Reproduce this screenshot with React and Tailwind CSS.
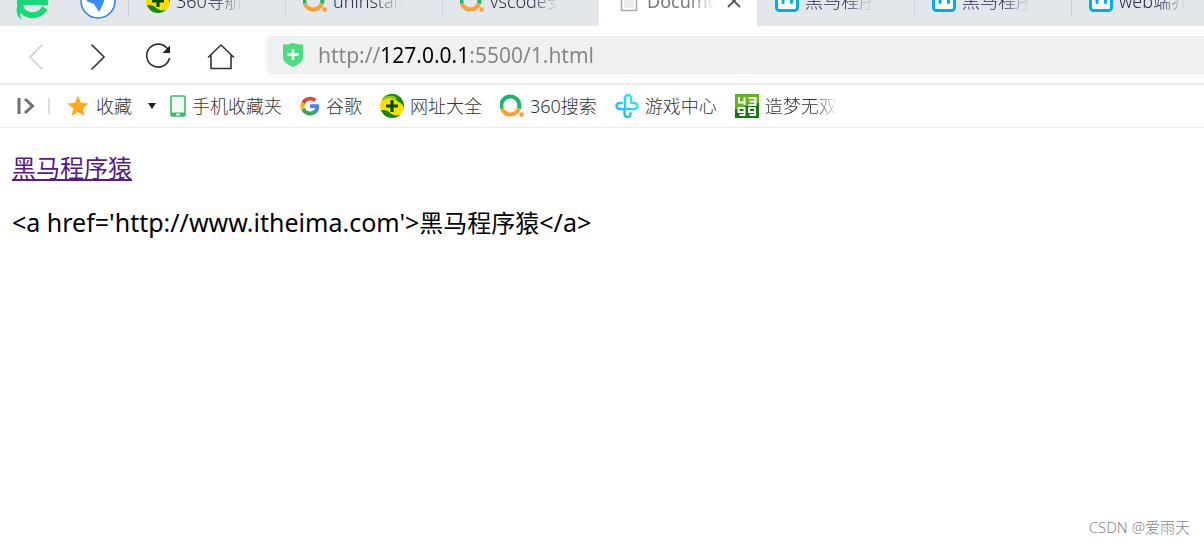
import { useState } from "react";
import { X } from "lucide-react";

const LeafIcon = () => (
  <svg viewBox="0 0 24 24" className="h-6 w-6 shrink-0">
    <circle cx="12" cy="12" r="12" fill="#ffdf00" />
    <path d="M2 5.500C6-1 15-2 20 3c3 3 4.500 7 4 11-1-4-4-5-7-7.500C12 3 7 3 2 5.500z" fill="#14891a" />
    <path d="M3 4.500C7 1 13 1 17 4l-2 1.500C11 3.500 7 4 3 7z" fill="#8fd000" />
    <path d="M1 16c2 5 6 8 11 8 3 0 6-1 8-3-4 1-8 0-11-3-2-2-5-2-8-2z" fill="#14891a" />
    <path d="M12 6v12M6 12h12" stroke="#064a0a" strokeWidth="3.200" />
  </svg>
);

const SearchRingIcon = () => (
  <svg viewBox="0 0 24 24" className="h-6 w-6 shrink-0" fill="none">
    <path d="M1.900 14.500A9 9 0 1 1 18.800 14.500" stroke="#19b866" strokeWidth="4" />
    <path d="M1.900 14.500A9 9 0 0 0 18.800 14.500" stroke="#ff9f36" strokeWidth="4" />
    <circle cx="21.600" cy="20.600" r="2.300" fill="#ff9f36" />
  </svg>
);

const PageIcon = () => (
  <svg viewBox="0 0 24 24" className="h-6 w-6 shrink-0">
    <path d="M4.500 2.500h10l5 5v14h-15z" fill="#fff" stroke="#a8a8a8" strokeWidth="1.500" />
    <path d="M7 5h7l3 4v10H7z" fill="#ececec" />
  </svg>
);

const RobotIcon = () => (
  <svg viewBox="0 0 24 24" className="h-6 w-6 shrink-0" fill="none">
    <rect x="1.500" y="1.500" width="21" height="20" rx="3" fill="#fff" stroke="#00aeec" strokeWidth="3" />
    <path d="M8 11v2.500M16.500 11v2.500" stroke="#00aeec" strokeWidth="3" strokeLinecap="round" />
  </svg>
);

const GoogleIcon = () => (
  <svg viewBox="0 0 48 48" className="h-5 w-5 shrink-0">
    <path fill="#ea4335" d="M24 11c3.500 0 6.600 1.200 9 3.500l6.700-6.700C35.600 4 30.300 1.500 24 1.500 15 1.500 7.300 6.600 3.600 14.100l7.800 6C13.300 14.600 18.200 11 24 11z" />
    <path fill="#4285f4" d="M46 24.500c0-1.500-.2-3.100-.4-4.500H24v9h12.400c-.6 2.900-2.200 5.300-4.600 6.900l7.500 5.900C43.700 37.600 46 31.600 46 24.500z" />
    <path fill="#fbbc05" d="M11.400 28.200c-.5-1.400-.8-2.800-.8-4.200s.3-2.900.8-4.200l-7.800-6C2 17 1 20.400 1 24s1 7 2.600 10.200z" />
    <path fill="#34a853" d="M24 46.500c6.300 0 11.600-2 15.400-5.600l-7.500-5.900c-2.100 1.400-4.700 2.200-7.900 2.200-5.800 0-10.700-3.700-12.600-9l-7.800 6C7.300 41.500 15 46.500 24 46.500z" />
  </svg>
);

const PhoneIcon = () => (
  <svg viewBox="0 0 16 22" className="h-[22px] w-4 shrink-0">
    <rect x="1" y="1" width="14" height="20" rx="1" fill="#f3fbf5" stroke="#3dba6c" strokeWidth="1.600" />
    <path d="M1 17.500h14V21H1z" fill="#3dba6c" />
    <path d="M6 19.500h4" stroke="#fff" strokeWidth="1.600" />
  </svg>
);

const GameIcon = () => (
  <svg viewBox="0 0 24 24" className="h-6 w-6 shrink-0" fill="none">
    <defs>
      <linearGradient id="game" x1="0" y1="1" x2="1" y2="0">
        <stop offset="0.2" stopColor="#26b5f5" />
        <stop offset="0.8" stopColor="#27f0d0" />
      </linearGradient>
    </defs>
    <path
      d="M10 14V4a3 3 0 0 1 6 0v3.500a1.500 1.500 0 0 0 1.500 1.500h2a3 3 0 0 1 0 6H10M7 9H4.500a3 3 0 0 0 0 6H8a1.500 1.500 0 0 1 1.500 1.500V20a3 3 0 0 0 6 0v-1"
      stroke="url(#game)"
      strokeWidth="2.400"
      strokeLinecap="round"
    />
  </svg>
);

const FourIcon = () => (
  <svg viewBox="0 0 24 24" className="h-6 w-6 shrink-0" fill="none">
    <path d="M0 0h24v24H0z" fill="#0f7a10" />
    <path d="M0 0h24v9L0 15z" fill="#62b514" />
    <path
      d="M4 3v5.500h6M9.500 3v8M13.500 4h7v7h-7M14.500 7.500h6M10 21H4.500M9.500 22v-8h-6v4h6M20 21h-5.500M20 22v-8h-6v4h6"
      stroke="#fff"
      strokeWidth="2"
    />
  </svg>
);

const StarIcon = () => (
  <svg viewBox="0 0 22 22" className="h-[22px] w-[22px] shrink-0">
    <path d="M11 .8l3 7 7.600.6-5.800 5 1.800 7.500L11 17l-6.600 3.900 1.800-7.500-5.800-5L8 7.800z" fill="#ffa91a" />
  </svg>
);

const tabs = [
  { title: "360导航", icon: LeafIcon },
  { title: "uninstall", icon: SearchRingIcon },
  { title: "vscode安", icon: SearchRingIcon },
  { title: "Document", icon: PageIcon, active: true },
  { title: "黑马程序", icon: RobotIcon },
  { title: "黑马程序", icon: RobotIcon },
  { title: "web端界", icon: RobotIcon },
];

const bookmarks = [
  { title: "手机收藏夹", icon: PhoneIcon },
  { title: "谷歌", icon: GoogleIcon },
  { title: "网址大全", icon: LeafIcon },
  { title: "360搜索", icon: SearchRingIcon },
  { title: "游戏中心", icon: GameIcon },
];

const TabBar = () => (
  <div className="flex h-[26px] items-end overflow-hidden bg-[#e3e7eb]">
    <div className="flex h-[50px] w-32 shrink-0 items-center gap-[30px] pl-4">
      {/* Browser logo */}
      <svg viewBox="0 0 34 38" className="h-[38px] w-[34px] shrink-0" fill="none">
        <path d="M4 20h25a12.500 12.500 0 1 0-25 1c0 13 17 17 25 5" stroke="#16d977" strokeWidth="6" />
        <path d="M3 21c-4 7-3 13 3 17-3-5-2-9 1-13z" fill="#16d977" />
      </svg>
      {/* Location button */}
      <button aria-label="Navigate" className="shrink-0">
        <svg viewBox="0 0 36 36" className="h-9 w-9">
          <circle cx="18" cy="18" r="17" fill="#fff" stroke="#2b7fff" strokeWidth="1.500" />
          <path d="M28 6L6 18l8 3 5 8 4-8z" fill="#3a8bff" />
        </svg>
      </button>
    </div>
    {tabs.map(({ title, icon: Icon, active }, i) => (
      <div
        key={i}
        className={
          active
            ? "flex h-[50px] w-[158px] shrink-0 items-center bg-white pl-[18px]"
            : "relative flex h-[50px] w-[157px] shrink-0 items-center pl-[18px]"
        }
      >
        {!active && i !== 4 && <span className="absolute bottom-[9px] left-0 h-8 w-px bg-[#cdd1d6]" />}
        <Icon />
        <span
          className={
            active
              ? "ml-1.5 w-[68px] overflow-hidden mask-r-from-60% text-lg font-normal whitespace-nowrap text-[#777]"
              : "ml-1.5 w-[68px] overflow-hidden mask-r-from-60% text-lg whitespace-nowrap text-[#26324c]"
          }
        >
          {title}
        </span>
        {active && (
          <button aria-label="Close tab" className="ml-2">
            <X size={22} strokeWidth={2} color="#555" />
          </button>
        )}
      </div>
    ))}
  </div>
);

const NavBar = () => {
  const [url, setUrl] = useState("http://127.0.0.1:5500/1.html");

  return (
    <div className="flex h-[59px] items-center border-b-2 border-[#ececec] pl-[5px]">
      <button aria-label="Back" className="flex w-[62px] shrink-0 justify-center pt-1">
        <svg viewBox="0 0 30 30" className="h-[30px] w-[30px]" fill="none" stroke="#d0d0d0" strokeWidth="1.600">
          <path d="M21.500 2.500L9 15l12.500 12.500" />
        </svg>
      </button>
      <button aria-label="Forward" className="flex w-[62px] shrink-0 justify-center pt-1">
        <svg viewBox="0 0 30 30" className="h-[30px] w-[30px]" fill="none" stroke="#333" strokeWidth="1.600">
          <path d="M8.500 2.500L21 15 8.500 27.500" />
        </svg>
      </button>
      <button aria-label="Reload" className="flex w-[62px] shrink-0 justify-center pt-1">
        <svg viewBox="0 0 30 30" className="h-[30px] w-[30px]" fill="none" stroke="#333" strokeWidth="1.600">
          <path d="M23 7.500A11.500 11.500 0 1 0 24.500 16" />
          <path d="M25 3.500V11h-7.500z" fill="#222" stroke="none" />
        </svg>
      </button>
      <button aria-label="Home" className="flex w-[62px] shrink-0 justify-center pt-1">
        <svg viewBox="0 0 30 30" className="h-[30px] w-[30px]" fill="none" stroke="#333" strokeWidth="1.600">
          <path d="M1 15.500L14 3l13 12.500M4 13v13.500h20V13" />
        </svg>
      </button>
      <div className="ml-3 flex-1 rounded-l-lg border border-r-0 border-[#f5f5f5] py-0.5 pl-px">
        <label className="flex h-[38px] items-center rounded-l bg-[#eff0f2] pl-[15px]">
          <svg viewBox="0 0 22 24" className="h-6 w-[22px] shrink-0">
            <path d="M1 1.500Q7 1.500 11 0q4 1.500 10 1.500V14c0 5-4 7-10 10C5 21 1 19 1 14z" fill="#4ade80" />
            <path d="M11 6v11M5.500 11.500h11" stroke="#fff" strokeWidth="2.600" />
          </svg>
          <input
            aria-label="Address"
            value={url}
            onChange={(e) => setUrl(e.target.value)}
            className="ml-3.5 h-8 flex-1 bg-[linear-gradient(90deg,#858585_64px,#000_64px,#000_150px,#858585_150px)] bg-clip-text text-[21px] font-normal text-transparent outline-none"
          />
        </label>
      </div>
    </div>
  );
};

const BookmarkBar = () => (
  <div className="flex h-[43px] items-center border-b border-[#ebebeb] pl-4 text-lg text-[#333]">
    <button aria-label="Toggle bookmarks" className="shrink-0">
      <svg viewBox="0 0 20 18" className="h-[18px] w-5" fill="none" stroke="#707070" strokeWidth="3">
        <path d="M3 1v16M9 2l7.500 7L9 16" />
      </svg>
    </button>
    <span className="ml-3 h-4 w-0.5 shrink-0 bg-[#dcdcdc]" />
    <button className="ml-[17px] flex shrink-0 items-center gap-[7px]">
      <StarIcon />
      收藏
      <svg viewBox="0 0 10 6" className="ml-2 h-1.5 w-2.5">
        <path d="M1 0h8L5 6z" fill="#222" />
      </svg>
    </button>
    <div className="ml-[13px] flex items-center gap-[18px]">
      {bookmarks.map(({ title, icon: Icon }) => (
        <a key={title} href="#" className="flex shrink-0 items-center gap-1.5 whitespace-nowrap">
          <Icon />
          {title}
        </a>
      ))}
      <a href="#" className="flex shrink-0 items-center gap-1.5 whitespace-nowrap">
        <FourIcon />
        <span className="w-[72px] overflow-hidden mask-r-from-70%">造梦无双</span>
      </a>
    </div>
  </div>
);

export default function App() {
  return (
    <div className="flex min-h-screen flex-col bg-white font-['Noto_Sans','Noto_Sans_CJK_SC',sans-serif] font-light">
      <TabBar />
      <NavBar />
      <BookmarkBar />

      {/* Page content */}
      <main className="px-3 pt-[22px] text-2xl leading-9 font-normal text-black">
        <p>
          <a href="http://www.itheima.com" className="text-[#551a8b] underline">
            黑马程序猿
          </a>
        </p>
        <p className="mt-[18px] text-[25px]">
          {"<a href='http://www.itheima.com'>"}
          <span className="text-2xl">黑马程序猿</span>
          {"</a>"}
        </p>
      </main>

      <footer className="mt-auto px-3.5 pb-1.5 text-right text-[15px] leading-5 text-[#888]">CSDN @爱雨天</footer>
    </div>
  );
}
